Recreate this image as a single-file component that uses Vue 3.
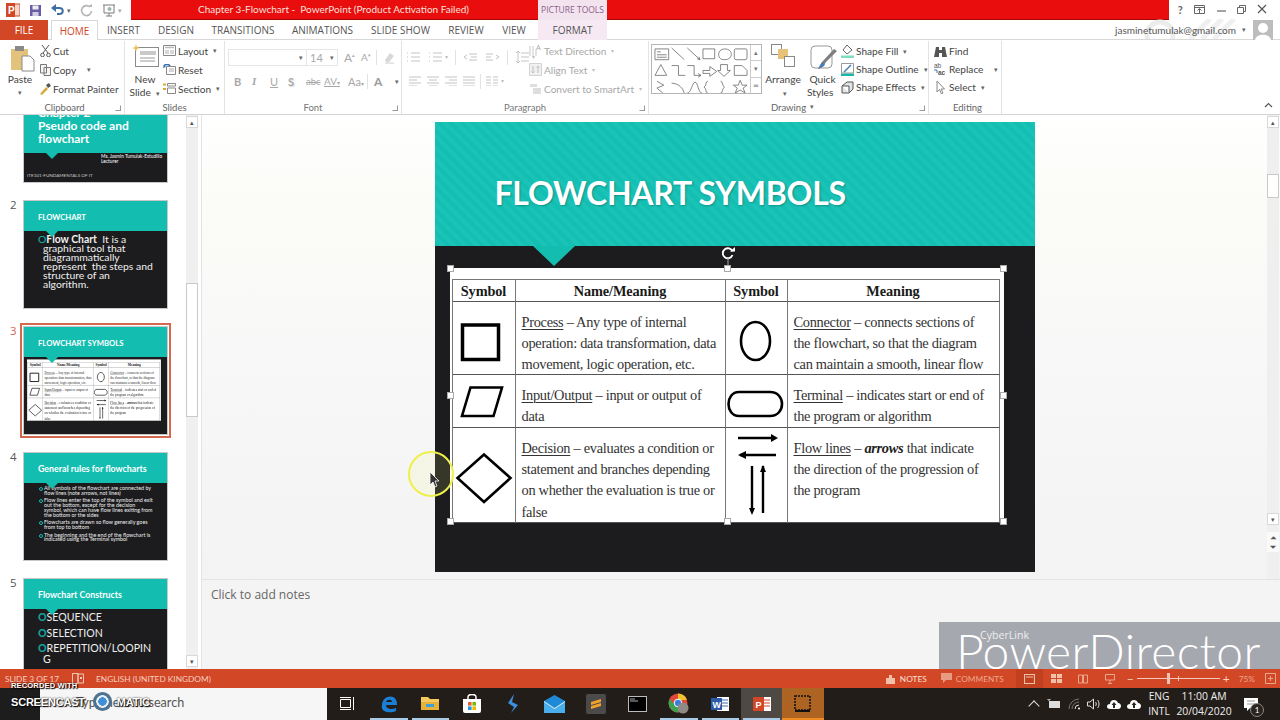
<script setup>
const tabs = [
  { t: 'INSERT', w: 51 }, { t: 'DESIGN', w: 54 }, { t: 'TRANSITIONS', w: 80 }, { t: 'ANIMATIONS', w: 79 },
  { t: 'SLIDE SHOW', w: 77 }, { t: 'REVIEW', w: 54 }, { t: 'VIEW', w: 42 }
]

const rows = [
  {
    sym: { h: 73, sw: 3.5, d: 'M9.5 23H45.5V57.5H9.5Z', f: '' },
    name: 'Process', first: ' – Any type of internal',
    lines: ['operation: data transformation, data', 'movement, logic operation, etc.'],
    sym2: { h: 73, sw: 2.6, d: 'M29.5 20C37.5 20 44 28.5 44 39S37.5 58 29.5 58 15 49.5 15 39 21.5 20 29.5 20Z', f: '' },
    name2: 'Connector', first2: ' – connects sections of',
    lines2: ['the flowchart, so that the diagram', 'can maintain a smooth, linear flow']
  },
  {
    sym: { h: 53, sw: 2.6, d: 'M17.5 12.5H49L40.5 41H9Z', f: '' },
    name: 'Input/Output', first: ' – input or output of',
    lines: ['data'],
    sym2: { h: 53, sw: 2.6, d: 'M13 17H44C60 17 60 41 44 41H13C-1 41-1 17 13 17Z', f: '' },
    name2: 'Terminal', first2: ' – indicates start or end of',
    lines2: ['the program or algorithm']
  },
  {
    sym: { h: 95, sw: 2.6, d: 'M31 26.5L57.5 50 31 74 4.5 50Z', f: '' },
    name: 'Decision', first: ' – evaluates a condition or',
    lines: ['statement and branches depending', 'on whether the evaluation is true or', 'false'],
    sym2: {
      h: 95, sw: 2.4,
      d: 'M12 10H46M14 27H50M26 38V82M37 38V85',
      f: 'M45 6L52 10 45 14ZM20 23L12 27 20 31ZM23 80H29L26 87ZM34 44H40L37 37Z'
    },
    name2: 'Flow lines', first2: ' – ', em: 'arrows', after: ' that indicate',
    lines2: ['the direction of the progression of', 'the program']
  }
]

const gallery = [
  'M3 4H17V15H3ZM5 7H9M5 10H15M5 12.5H15', 'M20 3L33 15', 'M36 3L49 15M49 15L46 14M49 15L48 12',
  'M52 4H64V14H52Z', 'M74 4C79 4 81 7 81 9.5S79 15 74 15 68 12 68 9.5 70 4 74 4Z', 'M85 4H96Q97 4 97 6V13Q97 15 95 15H86Q84 15 84 13V6Q84 4 85 4Z',
  'M9 20L3 31H15Z', 'M20 21H27V31H34', 'M36 21H43V31H50M50 31L47 29M50 31L47 33', 'M52 26H59V22L66 27 59 32V29H52Z', 'M70 20H77V26H80L73.5 32 67 26H70Z', 'M84 21H92L97 26V31H84Z',
  'M5 37L12 41 5 44 11 49', 'M20 39C27 39 32 44 33 50', 'M36 49C40 49 41 38 44 38S47 49 51 49', 'M57 37C54 37 56 42 53 43 56 44 54 49 57 49',
  'M70 37C73 37 71 42 74 43 71 44 73 49 70 49', 'M90 36L92 41H97L93 44 95 49 90 46 85 49 87 44 83 41H88Z'
]

const paragraphRow1 = [
  'M1 3H2M1 7H2M1 11H2M5 3H14M5 7H14M5 11H14',
  'M1 3H2M1 7H2M1 11H2M5 3H14M5 7H14M5 11H14'
]
</script>

<template>
  <div class="app">
    <!-- title bar -->
    <header class="titlebar">
      <div class="qat">
        <svg width="14" height="14" viewBox="0 0 14 14"><rect x="5" y="1" width="9" height="12" fill="#f3d6cc" stroke="#d24726"/><rect x="0" y="0" width="9" height="14" fill="#d24726"/><text x="2" y="11" class="logo-p">P</text></svg>
        <svg width="13" height="13" viewBox="0 0 13 13"><path d="M1 1H12V12H1Z" fill="#6a5aa8"/><rect x="3.5" y="1.5" width="6" height="4" fill="#eee"/><rect x="3.5" y="8" width="6" height="4" fill="#cfcfdf"/></svg>
        <svg width="14" height="12" viewBox="0 0 14 12"><path d="M2 4H8C13 4 13 10 8 10H6" fill="none" stroke="#3a6ea5" stroke-width="2"/><path d="M5 0V8L0 4Z" fill="#3a6ea5"/></svg>
        <span class="tiny-caret">▾</span>
        <svg width="13" height="13" viewBox="0 0 13 13"><path d="M10 3A5 5 0 1 0 11.5 7" fill="none" stroke="#b5b5b5" stroke-width="1.6"/><path d="M7 3H12V0Z" fill="#b5b5b5"/></svg>
        <svg width="14" height="14" viewBox="0 0 14 14"><path d="M1 2H13M2 2V10H12V2M7 10V13M4 13H10" fill="none" stroke="#7b7b7b"/><circle cx="7.5" cy="6" r="2" fill="#9bb7a8"/></svg>
        <span class="tiny-caret light">▾</span>
      </div>
      <div class="redbar">
        <div class="doc-title">Chapter 3-Flowchart -&nbsp; PowerPoint (Product Activation Failed)</div>
        <div class="tools-tab">PICTURE TOOLS</div>
      </div>
      <div class="winbtns">
        <span class="help">?</span>
        <svg width="11" height="9" viewBox="0 0 11 9"><path d="M.5.5H10.5V8.5H.5ZM.5 2.5H10.5M5.5 8V4M3.5 5.5L5.5 3.5 7.5 5.5" fill="none" stroke="#666"/></svg>
        <svg width="9" height="9" viewBox="0 0 9 9"><path d="M0 6H9" stroke="#666" stroke-width="1.2"/></svg>
        <svg width="9" height="9" viewBox="0 0 9 9"><path d="M.5 2.5H6.5V8.5H.5ZM2.5 2.5V.5H8.5V6.5H6.5" fill="none" stroke="#666"/></svg>
        <svg width="10" height="10" viewBox="0 0 10 10"><path d="M1 1L9 9M9 1L1 9" stroke="#555" stroke-width="1.2"/></svg>
      </div>
    </header>

    <!-- tabs -->
    <nav class="tabs">
      <span class="tab-file">FILE</span>
      <span class="tab-home">HOME</span>
      <span v-for="t in tabs" :key="t.t" class="tab" :style="{ width: t.w + 'px' }">{{ t.t }}</span>
      <span class="tab-format">FORMAT</span>
      <div class="account">
        <svg class="deco" width="150" height="20" viewBox="0 0 150 20"><circle cx="60" cy="16" r="13" fill="none" stroke="#ececec" stroke-width="5"/><path d="M90 20L110 0M102 20L122 0M114 20L134 0" stroke="#f0f0f0" stroke-width="5"/></svg>
        <span class="user">jasminetumulak@gmail.com</span>
        <span class="tiny-caret">▾</span>
        <svg class="avatar" width="20" height="20" viewBox="0 0 20 20"><rect width="20" height="20" fill="#bdbdbd"/><circle cx="10" cy="8" r="5" fill="#fff"/><path d="M2 20C3 13 17 13 18 20Z" fill="#fff"/></svg>
      </div>
    </nav>

    <!-- ribbon -->
    <section class="ribbon">
      <div class="group g-clip">
        <div class="gbody">
          <div class="bigcol paste">
            <svg width="24" height="26" viewBox="0 0 24 26"><rect x="0" y="3" width="17" height="21" fill="#e3c27c"/><rect x="4" y="0" width="9" height="5" fill="#8a8a8a"/><path d="M11 10H19L23 14V25H11Z" fill="#fff" stroke="#8a8a8a"/></svg>
            <span>Paste</span>
            <span class="tiny-caret">▾</span>
          </div>
          <div class="cmds">
            <div class="cmd"><svg width="11" height="12" viewBox="0 0 11 12"><path d="M2 0L8 8M9 0L3 8" stroke="#555" fill="none"/><circle cx="2.5" cy="10" r="1.8" fill="none" stroke="#555"/><circle cx="8.5" cy="10" r="1.8" fill="none" stroke="#555"/></svg><span>Cut</span></div>
            <div class="cmd"><svg width="11" height="12" viewBox="0 0 11 12"><path d="M.5.5H6.5V9H.5ZM4 3.5H10.5V11.5H4Z" fill="#f5f5f5" stroke="#777"/></svg><span>Copy</span><span class="tiny-caret sp">▾</span></div>
            <div class="cmd"><svg width="11" height="12" viewBox="0 0 11 12"><path d="M0 11L6 4 8 6 2 12Z" fill="#d9a93e"/><path d="M6 2L9 0 11 3 8 5Z" fill="#555"/></svg><span>Format Painter</span></div>
          </div>
        </div>
        <div class="glabel">Clipboard<i class="launch"></i></div>
      </div>

      <div class="group g-slides">
        <div class="gbody">
          <div class="bigcol newslide">
            <svg width="27" height="23" viewBox="0 0 27 23"><rect x="3.5" y="3.5" width="23" height="19" fill="#fff" stroke="#8a8a8a"/><rect x="8" y="7" width="16" height="4" fill="#c9c9c9"/><path d="M8 14H23M8 17H23" stroke="#9a9a9a"/><path d="M4 0L5 3 8 4 5 5 4 8 3 5 0 4 3 3Z" fill="#eec25b"/></svg>
            <span class="l2">New</span>
            <span class="l3">Slide <span class="tiny-caret">▾</span></span>
          </div>
          <div class="cmds">
            <div class="cmd"><svg width="13" height="11" viewBox="0 0 13 11"><path d="M.5.5H12.5V10.5H.5Z" fill="#fff" stroke="#888"/><path d="M2 2.5H11" stroke="#bbb" stroke-width="1.5"/><path d="M2 5H6V9H2Z" fill="#d7d7d7"/><path d="M7 5H11V9H7Z" fill="#d7d7d7"/></svg><span>Layout</span><span class="tiny-caret">▾</span></div>
            <div class="cmd"><svg width="13" height="11" viewBox="0 0 13 11"><path d="M3.5 2.5H12.5V10.5H3.5Z" fill="#fff" stroke="#888"/><path d="M1 2C2 0 6 0 7 2" stroke="#2f6fb0" fill="none" stroke-width="1.6"/><path d="M0 4L1 1 3 3Z" fill="#2f6fb0"/><path d="M6 5H11M6 7H11" stroke="#aaa"/></svg><span>Reset</span></div>
            <div class="cmd"><svg width="13" height="11" viewBox="0 0 13 11"><path d="M0 1.5H3" stroke="#d9a93e" stroke-width="2"/><path d="M4.5.5H12.5V3H4.5ZM4.5 5H12.5V10.5H4.5Z" fill="#fff" stroke="#888"/><path d="M0 6H3" stroke="#d9a93e" stroke-width="2"/></svg><span>Section</span><span class="tiny-caret">▾</span></div>
          </div>
        </div>
        <div class="glabel">Slides</div>
      </div>

      <div class="group g-font dim">
        <div class="gbody col">
          <div class="frow top">
            <span class="fontbox"><span class="tiny-caret">▾</span></span>
            <span class="sizebox">14<span class="tiny-caret">▾</span></span>
            <span class="grow">A<sup>▴</sup></span>
            <span class="shrink">A<sup>▾</sup></span>
            <i class="vsep"></i>
            <svg width="11" height="13" viewBox="0 0 11 13"><path d="M1 9L6 2 10 5 5 11H2Z" fill="#d8d8d8"/><path d="M1 12H10" stroke="#ccc"/></svg>
          </div>
          <div class="frow bot">
            <b>B</b><i class="it">I</i><u>U</u><b class="shd">S</b><s class="abc">abc</s><span class="av">AV<small>▾</small></span><span class="aa">Aa<small>▾</small></span><i class="vsep"></i><b class="colA">A</b><span class="tiny-caret">▾</span>
          </div>
        </div>
        <div class="glabel">Font<i class="launch"></i></div>
      </div>

      <div class="group g-para dim">
        <div class="gbody">
          <div class="para-left">
            <div class="frow p1">
              <svg v-for="(d, i) in paragraphRow1" :key="i" width="15" height="14" viewBox="0 0 15 14"><path :d="d" stroke="#c4c4c4" fill="none"/></svg>
              <span class="tiny-caret sm">▾</span><i class="vsep"></i>
              <svg width="15" height="14" viewBox="0 0 15 14"><path d="M6 4H14M8 7H14M6 10H14M4 5L1 7 4 9" stroke="#c4c4c4" fill="none"/></svg>
              <svg width="15" height="14" viewBox="0 0 15 14"><path d="M1 4H8M1 7H6M1 10H8M11 5L14 7 11 9" stroke="#c4c4c4" fill="none"/></svg>
              <i class="vsep"></i>
              <svg width="15" height="14" viewBox="0 0 15 14"><path d="M6 3H14M6 7H14M6 11H14M3 1V13M1 3L3 1 5 3M1 11L3 13 5 11" stroke="#c4c4c4" fill="none"/></svg>
              <span class="tiny-caret sm">▾</span>
            </div>
            <div class="frow p2">
              <svg width="14" height="10" viewBox="0 0 14 10"><path d="M1 1H13M1 4H9M1 7H13M1 10H9" stroke="#c4c4c4"/></svg>
              <svg width="14" height="10" viewBox="0 0 14 10"><path d="M1 1H13M3 4H11M1 7H13M3 10H11" stroke="#c4c4c4"/></svg>
              <svg width="14" height="10" viewBox="0 0 14 10"><path d="M1 1H13M5 4H13M1 7H13M5 10H13" stroke="#c4c4c4"/></svg>
              <svg width="14" height="10" viewBox="0 0 14 10"><path d="M1 1H13M1 4H13M1 7H13M1 10H13" stroke="#c4c4c4"/></svg>
              <i class="vsep"></i>
              <svg width="14" height="10" viewBox="0 0 14 10"><path d="M1 1H6M8 1H13M1 4H6M8 4H13M1 7H6M8 7H13M1 10H6M8 10H13" stroke="#c4c4c4"/></svg>
              <span class="tiny-caret sm">▾</span>
            </div>
          </div>
          <div class="cmds para-cmds">
            <div class="cmd"><svg width="13" height="13" viewBox="0 0 13 13"><path d="M1 2V12M4 2V12M7 5V12" stroke="#c8c8c8"/><text x="7" y="6" class="mini-a">A</text></svg><span>Text Direction</span><span class="tiny-caret sm">▾</span></div>
            <div class="cmd"><svg width="13" height="13" viewBox="0 0 13 13"><path d="M.5.5H12.5V12.5H.5Z" fill="#f1f1f1" stroke="#d3d3d3"/><path d="M4 3V10M9 3V10M2.5 8.5L4 10 5.5 8.5M7.5 4.5L9 3 10.5 4.5" stroke="#bdbdbd" fill="none"/></svg><span>Align Text</span><span class="tiny-caret sm">▾</span></div>
            <div class="cmd"><svg width="13" height="13" viewBox="0 0 13 13"><path d="M1 2H8V5H1ZM4 6H12V12H4Z" fill="#dedede"/></svg><span>Convert to SmartArt</span><span class="tiny-caret sm">▾</span></div>
          </div>
        </div>
        <div class="glabel">Paragraph<i class="launch"></i></div>
      </div>

      <div class="group g-draw">
        <div class="gbody">
          <div class="gallery">
            <svg width="98" height="48" viewBox="0 0 100 49"><path v-for="(d, i) in gallery" :key="i" :d="d" fill="none" stroke="#666" stroke-width=".8"/></svg>
            <div class="gal-btns"><span>▴</span><span>▾</span><span>≂</span></div>
          </div>
          <div class="bigcol arrange">
            <svg width="24" height="23" viewBox="0 0 24 23"><rect x="0.5" y="0.5" width="10" height="10" fill="#fff" stroke="#888"/><rect x="7" y="5" width="10" height="10" fill="#e6c17a"/><rect x="13.5" y="12.5" width="10" height="10" fill="#fff" stroke="#888"/></svg>
            <span class="l2">Arrange</span>
            <span class="l3"><span class="tiny-caret">▾</span></span>
          </div>
          <div class="bigcol quick">
            <svg width="28" height="26" viewBox="0 0 28 26"><rect x="1" y="1" width="21" height="22" rx="4" fill="#fff" stroke="#999"/><path d="M27 6L16 17 13 22 8 24 12 17 24 4Z" fill="#7f7f7f"/><path d="M8 24L12 17 15 20Z" fill="#3f7dbd"/></svg>
            <span class="l2">Quick</span>
            <span class="l3">Styles <span class="tiny-caret">▾</span></span>
          </div>
          <div class="cmds tight shapes">
            <div class="cmd"><svg width="13" height="13" viewBox="0 0 13 13"><path d="M6 0L11 5 6 9 2 5Z" fill="#fff" stroke="#666"/><rect y="10.5" width="13" height="2.5" fill="#7edec0"/></svg><span>Shape Fill</span><span class="tiny-caret">▾</span></div>
            <div class="cmd"><svg width="13" height="13" viewBox="0 0 13 13"><path d="M.5.5H12.5V10H.5Z" fill="#fff" stroke="#999"/><path d="M3 9L10 2" stroke="#3f7dbd" stroke-width="1.5"/><rect y="10.5" width="13" height="2.5" fill="#1fb5a6"/></svg><span>Shape Outline</span><span class="tiny-caret">▾</span></div>
            <div class="cmd"><svg width="13" height="13" viewBox="0 0 13 13"><path d="M1 5L6 1H12V8L8 12H1Z" fill="#e3e3e3" stroke="#555"/><path d="M1 5H8V12" fill="#fff" stroke="#555"/></svg><span>Shape Effects</span><span class="tiny-caret">▾</span></div>
          </div>
        </div>
        <div class="glabel">Drawing<i class="launch"></i></div>
      </div>

      <div class="group g-edit">
        <div class="gbody">
          <div class="cmds tight">
            <div class="cmd"><svg width="13" height="11" viewBox="0 0 13 11"><path d="M0 11L2 1H5V4H8V1H11L13 11H8V7H5V11Z" fill="#555"/></svg><span>Find</span></div>
            <div class="cmd"><svg width="13" height="13" viewBox="0 0 13 13"><text x="0" y="5" class="ab">ab</text><text x="4" y="12" class="ab strong">ac</text><path d="M0 7H3V10" fill="none" stroke="#3f7dbd"/></svg><span>Replace</span><span class="tiny-caret sp2">▾</span></div>
            <div class="cmd"><svg width="13" height="13" viewBox="0 0 13 13"><path d="M3 0V11L5.5 8.5 7.5 13 9 12 7 8H10.5Z" fill="#fff" stroke="#888"/></svg><span>Select</span><span class="tiny-caret">▾</span></div>
          </div>
        </div>
        <div class="glabel">Editing</div>
      </div>

      <svg class="collapse" width="9" height="6" viewBox="0 0 9 6"><path d="M1 5L4.5 1.5 8 5" fill="none" stroke="#555" stroke-width="1.2"/></svg>
    </section>

    <!-- main -->
    <main class="main">
      <aside class="thumbs">
        <div class="thumb-list">
          <div class="trow">
            <span class="num"></span>
            <div class="thumb">
              <div class="thead tall"><span class="t1">Chapter 2<br>Pseudo code and<br>flowchart</span><i class="notch"></i></div>
              <div class="tbody"><span class="author">Ms. Jasmin Tumulak-Estudillo<br>Lecturer</span><span class="course">ITE101-FUNDAMENTALS OF IT</span></div>
            </div>
          </div>
          <div class="trow">
            <span class="num">2</span>
            <div class="thumb">
              <div class="thead"><span class="tt">FLOWCHART</span><i class="notch"></i></div>
              <div class="tbody"><p class="t2"><span class="bullet o">O</span><b>Flow Chart</b>&nbsp; It is a<br>graphical tool that<br>diagrammatically<br>represent&nbsp; the steps and<br>structure of an<br>algorithm.</p></div>
            </div>
          </div>
          <div class="trow active">
            <span class="num">3</span>
            <div class="thumb">
              <div class="thead"><span class="tt">FLOWCHART SYMBOLS</span><i class="notch"></i></div>
              <div class="tbody">
                <div class="mini-wrap">
                  <div class="sheet">
                    <div class="grid">
                      <div class="hcell">Symbol</div><div class="hcell">Name/Meaning</div><div class="hcell">Symbol</div><div class="hcell">Meaning</div>
                      <template v-for="r in rows" :key="r.name">
                        <div class="sym"><svg width="63" :height="r.sym.h" :viewBox="`0 0 63 ${r.sym.h}`"><path :d="r.sym.d" fill="none" stroke="#000" :stroke-width="r.sym.sw"/></svg></div>
                        <div class="desc"><u>{{ r.name }}</u>{{ r.first }}<div v-for="l in r.lines" :key="l">{{ l }}</div></div>
                        <div class="sym"><svg width="62" :height="r.sym2.h" :viewBox="`0 0 62 ${r.sym2.h}`"><path :d="r.sym2.d" fill="none" stroke="#000" :stroke-width="r.sym2.sw"/><path :d="r.sym2.f" fill="#000"/></svg></div>
                        <div class="desc"><u>{{ r.name2 }}</u>{{ r.first2 }}<b v-if="r.em"><i>{{ r.em }}</i></b>{{ r.after }}<div v-for="l in r.lines2" :key="l">{{ l }}</div></div>
                      </template>
                    </div>
                  </div>
                </div>
              </div>
            </div>
          </div>
          <div class="trow">
            <span class="num">4</span>
            <div class="thumb">
              <div class="thead"><span class="tt cap">General rules for flowcharts</span><i class="notch"></i></div>
              <div class="tbody">
                <ul class="t4">
                  <li>All symbols of the flowchart are connected by<br>flow lines (note arrows, not lines)</li>
                  <li>Flow lines enter the top of the symbol and exit<br>out the bottom, except for the decision<br>symbol, which can have flow lines exiting from<br>the bottom or the sides</li>
                  <li>Flowcharts are drawn so flow generally goes<br>from top to bottom</li>
                  <li>The beginning and the end of the flowchart is<br>indicated using the Terminal symbol</li>
                </ul>
              </div>
            </div>
          </div>
          <div class="trow">
            <span class="num">5</span>
            <div class="thumb">
              <div class="thead"><span class="tt cap">Flowchart Constructs</span><i class="notch"></i></div>
              <div class="tbody">
                <div class="t5"><span class="bullet">O</span>SEQUENCE</div>
                <div class="t5"><span class="bullet">O</span>SELECTION</div>
                <div class="t5"><span class="bullet">O</span>REPETITION/LOOPIN<span class="t5-g">G</span></div>
              </div>
            </div>
          </div>
        </div>
      </aside>
      <div class="vscroll left">
        <span class="sbtn">▴</span>
        <span class="sthumb"></span>
        <span class="sbtn end">▾</span>
      </div>

      <div class="workspace">
        <div class="stage">
          <div class="canvas">
            <div class="slide">
              <div class="slide-head">
                <h1>FLOWCHART SYMBOLS</h1>
                <i class="slide-notch"></i>
              </div>
              <div class="slide-body">
                <div class="sheet">
                  <div class="grid">
                    <div class="hcell">Symbol</div><div class="hcell">Name/Meaning</div><div class="hcell">Symbol</div><div class="hcell">Meaning</div>
                    <template v-for="r in rows" :key="r.name">
                      <div class="sym"><svg width="63" :height="r.sym.h" :viewBox="`0 0 63 ${r.sym.h}`"><path :d="r.sym.d" fill="none" stroke="#000" :stroke-width="r.sym.sw"/></svg></div>
                      <div class="desc"><u>{{ r.name }}</u>{{ r.first }}<div v-for="l in r.lines" :key="l">{{ l }}</div></div>
                      <div class="sym"><svg width="62" :height="r.sym2.h" :viewBox="`0 0 62 ${r.sym2.h}`"><path :d="r.sym2.d" fill="none" stroke="#000" :stroke-width="r.sym2.sw"/><path :d="r.sym2.f" fill="#000"/></svg></div>
                      <div class="desc"><u>{{ r.name2 }}</u>{{ r.first2 }}<b v-if="r.em"><i>{{ r.em }}</i></b>{{ r.after }}<div v-for="l in r.lines2" :key="l">{{ l }}</div></div>
                    </template>
                  </div>
                  <i class="h h-tl"></i><i class="h h-tc"></i><i class="h h-tr"></i><i class="h h-ml"></i><i class="h h-mr"></i><i class="h h-bl"></i><i class="h h-bc"></i><i class="h h-br"></i>
                  <svg class="rotate" width="14" height="18" viewBox="0 0 14 18"><path d="M11.5 4.5A5 5 0 1 0 11.5 8" fill="none" stroke="#fff" stroke-width="1.8"/><path d="M9 4.5H14V0Z" fill="#fff"/><path d="M7 11V18" stroke="#aaa"/></svg>
                </div>
              </div>
            </div>
            <div class="pointer">
              <svg width="50" height="50" viewBox="0 0 50 50"><circle cx="25" cy="25" r="22" fill="rgba(247,247,120,.12)" stroke="#eef04a" stroke-width="2"/><path d="M24 23V36L27 33 29 38 31 37 29 32H33Z" fill="#333" stroke="#fff" stroke-width=".8"/></svg>
            </div>
          </div>
          <div class="vscroll right">
            <span class="sbtn">▴</span>
            <span class="sthumb r"></span>
            <span class="sbtn end2">▾</span>
            <span class="pg">⏶</span>
            <span class="pg">⏷</span>
          </div>
        </div>
        <div class="notes">Click to add notes</div>
      </div>
    </main>

    <!-- status -->
    <footer class="status">
      <span class="s-slide">SLIDE 3 OF 17</span>
      <svg class="s-book" width="12" height="11" viewBox="0 0 12 11"><path d="M.5.5H6V10.5H.5ZM6 1H11.5V10H6Z" fill="none" stroke="#f3c8b8"/><path d="M8 4L10 6M10 4L8 6" stroke="#f3c8b8"/></svg>
      <span class="s-lang">ENGLISH (UNITED KINGDOM)</span>
      <div class="s-right">
        <svg width="9" height="10" viewBox="0 0 9 10"><path d="M0 4H9V10H0ZM3 4V1H6V4Z" fill="#f2bfa9"/></svg>
        <span class="s-notes">NOTES</span>
        <svg width="11" height="11" viewBox="0 0 11 11"><path d="M0 0H11V7H5L2 10V7H0Z" fill="#e79b80"/></svg>
        <span class="s-comments">COMMENTS</span>
        <span class="view on"><svg width="11" height="10" viewBox="0 0 11 10"><path d="M.5.5H10.5V9.5H.5ZM2 3H9" fill="none" stroke="#f2bfa9" stroke-width="1.2"/></svg></span>
        <span class="view"><svg width="11" height="9" viewBox="0 0 11 9"><path d="M0 0H5V4H0ZM6 0H11V4H6ZM0 5H5V9H0ZM6 5H11V9H6Z" fill="#f2bfa9"/></svg></span>
        <span class="view"><svg width="10" height="10" viewBox="0 0 10 10"><path d="M.5 1H4.5V9H.5ZM5.5 1H9.5V9H5.5Z" fill="none" stroke="#eba78e"/></svg></span>
        <span class="view"><svg width="10" height="10" viewBox="0 0 10 10"><path d="M.5.5H9.5V6H.5ZM5 6V9M3 9.5H7" fill="none" stroke="#eba78e"/></svg></span>
        <div class="zoom">
          <span class="zm">−</span>
          <div class="track"><i class="knob"></i><i class="mid"></i></div>
          <span class="zm">+</span>
          <span class="zpct">75%</span>
          <svg width="11" height="11" viewBox="0 0 11 11"><path d="M.5.5H10.5V10.5H.5ZM3 5.5H8M5.5 3V8" fill="none" stroke="#eba78e"/></svg>
        </div>
      </div>
    </footer>

    <!-- taskbar -->
    <div class="taskbar">
      <div class="startcell"></div>
      <div class="searchbox">Type here to search</div>
      <div class="tbar-icons">
        <span class="ti"><svg width="15" height="13" viewBox="0 0 15 13"><path d="M.5 2.5H10.5V10.5H.5ZM0 .5H11M0 12.5H11M13.5 0V13" fill="none" stroke="#fff"/></svg></span>
        <span class="ti u"><svg width="18" height="18" viewBox="0 0 18 18"><path d="M2 10C2 3 9 0 13 2 17 4 17 8 17 10H6C6 14 11 15 16 13V16C10 19 0 17 2 10ZM6 7H12C12 4 7 4 6 7Z" fill="#1c7fd6"/></svg></span>
        <span class="ti u"><svg width="18" height="15" viewBox="0 0 18 15"><path d="M0 1H7L9 3H18V14H0Z" fill="#f4c95d"/><rect x="0" y="6" width="18" height="8" fill="#e8b23a"/><rect x="5" y="8" width="8" height="3" fill="#3f9fd8"/></svg></span>
        <span class="ti"><svg width="20" height="19" viewBox="0 0 20 19"><path d="M1 5H19V17Q19 19 17 19H3Q1 19 1 17Z" fill="#fff"/><path d="M6 6V3C6-.5 14-.5 14 3V6" fill="none" stroke="#fff" stroke-width="1.5"/><rect x="6" y="8" width="3.6" height="3.6" fill="#e55f3b"/><rect x="10.4" y="8" width="3.6" height="3.6" fill="#7fba00"/><rect x="6" y="12.4" width="3.6" height="3.6" fill="#1f9ae0"/><rect x="10.4" y="12.4" width="3.6" height="3.6" fill="#f4b800"/></svg></span>
        <span class="ti"><svg width="12" height="19" viewBox="0 0 12 19"><path d="M7 0L1 9 7 13 4 19 11 11 5 8Z" fill="#3b8fdd"/></svg></span>
        <span class="ti"><svg width="21" height="18" viewBox="0 0 21 18"><path d="M0 6L10.5 0 21 6V18H0Z" fill="#1e8ad6"/><path d="M0 6L10.5 13 21 6V8L10.5 15 0 8Z" fill="#dff1fc"/><path d="M0 7L10.5 14 21 7V18H0Z" fill="#4aaeec"/></svg></span>
        <span class="ti"><svg width="20" height="20" viewBox="0 0 20 20"><rect width="20" height="20" rx="2" fill="#4a4a4a"/><path d="M5 8L15 5V8L5 11ZM5 12L15 9V12L5 15Z" fill="#f0a02b"/></svg></span>
        <span class="ti"><svg width="19" height="16" viewBox="0 0 19 16"><rect x=".5" y=".5" width="18" height="15" fill="#000" stroke="#bbb"/><path d="M2 3H7M2 5H10" stroke="#ddd" stroke-width=".8"/></svg></span>
        <span class="ti u"><svg width="21" height="21" viewBox="0 0 21 21"><circle cx="10" cy="10" r="9.5" fill="#e04a3b"/><path d="M10 .5A9.5 9.5 0 0 1 19 7H10Z" fill="#f2c12e"/><path d="M1.5 6A9.5 9.5 0 0 0 10 19.5L13 12 7 12Z" fill="#3da14f"/><circle cx="10" cy="10" r="3.8" fill="#3a7fd8" stroke="#fff"/><circle cx="15" cy="15" r="5.5" fill="#8f8a86"/></svg></span>
        <span class="ti u"><svg width="18" height="16" viewBox="0 0 18 16"><rect x="6" y="1" width="12" height="14" fill="#fff"/><path d="M11 4H17M11 7H17M11 10H17" stroke="#3d6fb5"/><rect y="2" width="11" height="12" fill="#2a5aa8"/><text x="1.5" y="11.5" class="tb-l">W</text></svg></span>
        <span class="ti u act-ppt"><svg width="18" height="16" viewBox="0 0 18 16"><rect x="6" y="1" width="12" height="14" fill="#fff"/><path d="M11 4H17M11 7H17M11 10H17" stroke="#d24726"/><rect y="1" width="11" height="14" fill="#d24726"/><text x="2.5" y="12" class="tb-l">P</text></svg></span>
        <span class="ti act-snip"><svg width="17" height="17" viewBox="0 0 17 17"><rect x="1" y="1" width="15" height="14" fill="none" stroke="#111" stroke-width="1.5" stroke-dasharray="2 1"/><path d="M1 16H16" stroke="#111" stroke-width="2"/></svg></span>
      </div>
      <div class="tray">
        <span class="tr-chev"></span>
        <svg width="14" height="10" viewBox="0 0 14 10"><path d="M2 2H13V9H2Z" fill="#ddd"/><path d="M0 0H4M2 0V2" stroke="#ddd"/></svg>
        <svg width="13" height="12" viewBox="0 0 13 12"><path d="M1 11A10 10 0 0 1 11 1M4 11A7 7 0 0 1 11 4" stroke="#7a7470" fill="none"/><path d="M7 11A4 4 0 0 1 11 7" stroke="#ddd" fill="none"/><circle cx="11" cy="10.5" r="1" fill="#fff"/></svg>
        <svg width="13" height="12" viewBox="0 0 13 12"><path d="M.5 4H3L6.5 1V11L3 8H.5Z" fill="none" stroke="#ddd"/><path d="M8.5 4C9.5 5 9.5 7 8.5 8M10.5 2C12.5 4 12.5 8 10.5 10" fill="none" stroke="#ddd"/></svg>
        <svg width="14" height="10" viewBox="0 0 14 10"><path d="M3 10C-1 10-1 5 3 5 3 0 10 0 11 4 15 4 15 10 11 10Z" fill="#fff"/><path d="M7 3L4.5 6H6V9H8V6H9.5Z" fill="#2a2420"/></svg>
        <svg width="14" height="10" viewBox="0 0 14 10"><path d="M3 10C-1 10-1 5 3 5 3 0 10 0 11 4 15 4 15 10 11 10Z" fill="#fff"/><path d="M7 3L4.5 6H6V9H8V6H9.5Z" fill="#2a2420"/></svg>
        <div class="lang"><span>ENG</span><span>INTL</span></div>
        <div class="clock"><span>11:00 AM</span><span>20/04/2020</span></div>
        <div class="notif">
          <svg width="15" height="15" viewBox="0 0 15 15"><path d="M0 1H14V11H6L3 14V11H0Z" fill="#fff"/><path d="M3 4H11M3 7H11" stroke="#999"/></svg>
          <span class="badge">1</span>
        </div>
      </div>
    </div>

    <!-- recording overlays -->
    <div class="powerdirector">
      <span class="cyber">CyberLink</span>
      <span class="pd">PowerDirector</span>
    </div>
    <div class="screencast">
      <span class="rec">RECORDED WITH</span>
      <div class="sc-row"><span>SCREENCAST</span><i class="sc-dot"></i><span class="matic">MATIC</span></div>
    </div>
  </div>
</template>

<style scoped>
.app {
  position: relative;
  width: 1280px;
  height: 720px;
  overflow: hidden;
  display: flex;
  flex-direction: column;
  background: #fff;
  color: #444;
  font-family: Lato, "Open Sans", sans-serif;
  font-size: 10px;
  filter: blur(.3px);
}
svg { display: block; flex: none; }
.tiny-caret { font-size: 7px; color: #666; margin-left: 3px; line-height: 1; }
.tiny-caret.light { color: #aaa; }
.tiny-caret.sm { font-size: 6px; color: #c0c0c0; }
.tiny-caret.sp { margin-left: 9px; }
.tiny-caret.sp2 { margin-left: 9px; }
.logo-p { font: 700 10px "Liberation Sans", sans-serif; fill: #fff; }

/* title bar */
.titlebar { display: flex; height: 20px; flex: none; }
.qat { width: 131px; flex: none; display: flex; align-items: center; gap: 9px; padding-left: 6px; box-sizing: border-box; }
.qat .tiny-caret { margin-left: -7px; }
.redbar { flex: 1; display: flex; background: #e90d0d; border-bottom: 1px solid #a00808; padding-left: 67px; }
.doc-title { width: 340px; flex: none; color: #fbe0dc; font-size: 10px; line-height: 19px; white-space: nowrap; }
.tools-tab { width: 69px; background: #f3e3ef; color: #8a5f88; font: 8.5px/19px "Open Sans", sans-serif; text-align: center; height: 20px; }
.winbtns { width: 111px; flex: none; display: flex; align-items: center; justify-content: space-around; padding: 0 7px 2px 3px; box-sizing: border-box; }
.help { font-size: 11px; font-weight: 700; color: #666; }

/* tabs */
.tabs { height: 20px; flex: none; display: flex; align-items: center; font: 10px "Open Sans", sans-serif; color: #555; position: relative; border-bottom: 1px solid #d8d8d8; box-sizing: border-box; }
.tab { text-align: center; flex: none; }
.tab-file { width: 48px; height: 20px; line-height: 20px; background: #d24726; color: #fff; text-align: center; flex: none; }
.tab-home { width: 47px; margin-left: 3px; height: 20px; line-height: 20px; color: #d24726; text-align: center; background: #fff; border: 1px solid #d8d8d8; border-bottom: 0; box-sizing: border-box; flex: none; position: relative; }
.tab-format { width: 69px; margin-left: 3px; height: 20px; line-height: 20px; text-align: center; background: #f6e9f3; color: #555; flex: none; }
.account { margin-left: auto; display: flex; align-items: center; position: relative; padding-right: 7px; height: 20px; }
.deco { position: absolute; right: 30px; top: -1px; }
.user { position: relative; font: 10px Lato, sans-serif; color: #555; }
.account .tiny-caret { margin: 0 7px 0 6px; position: relative; }
.avatar { position: relative; }

/* ribbon */
.ribbon { height: 75px; flex: none; display: flex; border-bottom: 1px solid #d4d4d4; position: relative; box-sizing: border-box; }
.group { display: flex; flex-direction: column; height: 73px; margin-top: 1px; border-right: 1px solid #e3e3e3; box-sizing: border-box; flex: none; }
.gbody { flex: 1; display: flex; min-height: 0; }
.gbody.col { flex-direction: column; }
.glabel { height: 16px; line-height: 19px; text-align: center; font-size: 9.5px; color: #666; position: relative; flex: none; }
.launch { position: absolute; right: 3px; bottom: 3px; width: 4px; height: 4px; border: 1px solid #999; border-top-color: transparent; border-left-color: transparent; }
.g-clip { width: 125px; padding-left: 5px; }
.g-slides { width: 100px; }
.g-font { width: 177px; }
.g-para { width: 247px; }
.g-draw { width: 280px; }
.g-edit { width: 73px; }
.bigcol { display: flex; flex-direction: column; align-items: center; line-height: 13px; flex: none; font-size: 10.2px; }
.cmds { display: flex; flex-direction: column; }
.cmd { display: flex; align-items: center; height: 19px; gap: 2px; white-space: nowrap; font-size: 10.1px; }
.cmds.tight { padding-top: 1px; }
.cmds.tight .cmd { height: 18px; }
.paste { width: 30px; padding-top: 5px; margin-right: 5px; }
.paste svg { margin: 0 0 1px 6px; }
.paste .tiny-caret { margin: 3px 0 0; }
.newslide { width: 34px; margin: 3px 1px 0 3px; }
.newslide svg { margin-bottom: 6px; }
.dim { color: #b2b2b2; }
.dim .glabel { color: #777; }
.frow { display: flex; align-items: center; color: #a8a8a8; }
.frow.top { height: 18px; margin: 7px 0 0 3px; font-size: 11px; }
.frow.bot { height: 18px; margin: 6px 0 0 9px; font-size: 11px; }
.fontbox { width: 79px; height: 17px; border: 1px solid #e6e6e6; box-sizing: border-box; display: flex; justify-content: flex-end; align-items: center; padding-right: 3px; }
.sizebox { width: 31px; height: 17px; border: 1px solid #e6e6e6; border-left: 0; box-sizing: border-box; display: flex; justify-content: space-between; align-items: center; padding: 0 3px; }
.grow { margin-left: 6px; font-size: 12px; width: 17px; }
.shrink { font-size: 10px; width: 15px; }
.grow sup, .shrink sup { font-size: 5px; }
.vsep { width: 1px; height: 15px; background: #e2e2e2; flex: none; }
.top .vsep { margin-right: 7px; }
.bot > b, .bot > .it, .bot > u { width: 18px; text-align: left; }
.bot .it { font-style: italic; font-family: "Liberation Serif", serif; font-weight: 700; }
.bot .shd { text-shadow: 1px 1px 0 #ddd; }
.abc { width: 18px; font-size: 9.5px; }
.av { width: 24px; font-size: 10px; text-decoration: underline; }
.av small, .aa small { font-size: 6px; }
.aa { width: 19px; font-size: 11px; }
.bot .vsep { margin-right: 6px; }
.colA { font-size: 12px; color: #9a9a9a; }
.para-left { width: 127px; padding-left: 4px; box-sizing: border-box; flex: none; }
.frow.p1 { height: 18px; margin-top: 7px; gap: 7px; }
.frow.p1 .tiny-caret { margin-left: -5px; }
.frow.p2 { height: 18px; margin-top: 6px; margin-left: 2px; gap: 4px; }
.frow.p2 .tiny-caret { margin-left: -2px; }
.para-cmds .cmd { color: #a8a8a8; }
.mini-a { font: 7px "Liberation Sans", sans-serif; fill: #aaa; }
.gallery { width: 111px; height: 50px; margin: 3px 0 0 2px; border: 1px solid #b5b5b5; box-sizing: border-box; display: flex; flex: none; }
.gal-btns { width: 11px; margin-left: auto; display: flex; flex-direction: column; border-left: 1px solid #ccc; }
.gal-btns span { flex: 1; font-size: 7px; text-align: center; line-height: 15px; color: #777; border-bottom: 1px solid #ccc; }
.gal-btns span:last-child { border-bottom: 0; }
.arrange { width: 36px; margin-left: 3px; padding-top: 3px; }
.arrange svg { margin-bottom: 6px; }
.quick { width: 31px; margin-left: 6px; padding-top: 4px; }
.quick svg { margin-bottom: 2px; margin-left: 2px; }
.shapes { margin-left: 3px; }
.g-edit { padding-left: 5px; }
.ab { font: 6.5px "Liberation Sans", sans-serif; fill: #555; }
.ab.strong { font-weight: 700; }
.collapse { position: absolute; right: 7px; bottom: 6px; }

/* main */
.main { flex: 1; min-height: 0; display: flex; }
.thumbs { width: 186px; flex: none; overflow: hidden; }
.thumb-list { margin-top: -41px; display: flex; flex-direction: column; gap: 17px; }
.trow { display: flex; position: relative; }
.num { width: 23px; flex: none; box-sizing: border-box; padding: 0 0 0 10px; font: 11.5px/9px "Open Sans", sans-serif; color: #555; }
.trow.active .num { color: #d2694f; }
.thumb { width: 145px; height: 109px; display: flex; flex-direction: column; border: 1px solid #c8c8c8; box-sizing: border-box; flex: none; overflow: hidden; }
.trow.active .thumb { outline: 2px solid #d2694f; outline-offset: 1px; overflow: visible; }
.thead { height: 30px; flex: none; background: #13bdb0; position: relative; }
.thead.tall { height: 78px; }
.notch { position: absolute; left: 22px; bottom: -6px; width: 0; height: 0; border-left: 6px solid transparent; border-right: 6px solid transparent; border-top: 6px solid #13bdb0; z-index: 1; }
.tbody { flex: 1; background: #1c1c1e; position: relative; color: #eee; min-height: 0; }
.t1 { position: absolute; left: 14px; bottom: 8px; color: #fff; font: 700 12px/13px Lato, sans-serif; white-space: nowrap; }
.tt { position: absolute; left: 14px; top: 11px; color: #fff; font: 700 7.7px/10px Lato, sans-serif; white-space: nowrap; }
.tt.cap { font-size: 8.8px; }
.author { position: absolute; right: 2px; top: 1px; width: 64px; font: 4.8px/4.6px Lato, sans-serif; color: #fff; white-space: nowrap; }
.course { position: absolute; left: 3px; bottom: 4px; font: 4.6px Lato, sans-serif; color: #ccc; white-space: nowrap; }
.t2 { margin: 4px 0 0 19px; text-indent: -5px; font: 10.4px/9px Lato, sans-serif; color: #f0f0f0; white-space: nowrap; }
.bullet { color: #13bdb0; }
.bullet.o { margin-right: 0; }
.mini-wrap { width: 145px; height: 0; margin-left: 3px; transform: scale(.2417); transform-origin: 0 0; padding-top: 10px; }
.t4 { list-style: none; margin: 3px 0 0 20px; padding: 0; font: 5.35px/4.7px Lato, sans-serif; color: #eee; }
.t4 li { position: relative; margin-bottom: 3px; white-space: nowrap; }
.t4 li::before { content: ""; position: absolute; left: -5px; top: 1px; width: 2px; height: 2px; border: .6px solid #13bdb0; border-radius: 50%; }
.t5 { margin-left: 14px; font: 10.6px/15.5px Lato, sans-serif; color: #eee; }
.t5:first-child { margin-top: 1px; }
.t5 .bullet { color: #1a9d93; font-weight: 900; }
.t5-g { display: block; margin: -3px 0 0 5px; line-height: 11px; }

.vscroll { flex: none; position: relative; display: flex; flex-direction: column; background: #f0f0f0; }
.vscroll.left { width: 12px; margin-right: 3px; }
.sbtn { height: 12px; background: #fff; border: 1px solid #d8d8d8; box-sizing: border-box; font-size: 7px; line-height: 10px; text-align: center; color: #555; margin-top: 1px; flex: none; }
.sthumb { height: 134px; margin-top: 155px; background: #fff; border: 1px solid #c9c9c9; box-sizing: border-box; flex: none; }
.sbtn.end { margin-top: auto; margin-bottom: 2px; }

.workspace { flex: 1; min-width: 0; display: flex; flex-direction: column; border-left: 1px solid #e4e4e4; }
.stage { flex: 1; min-height: 0; display: flex; background: linear-gradient(#fff, #fbfbf7 20%, #f8f8f8 50%, #f3f3f3); }
.canvas { flex: 1; min-width: 0; display: flex; justify-content: center; padding-top: 7px; position: relative; }
.slide { width: 600px; height: 450px; display: flex; flex-direction: column; flex: none; }
.slide-head { height: 124px; flex: none; position: relative; background: repeating-linear-gradient(45deg, #13bfb2 0, #13bfb2 4px, #1bc3b7 4px, #1bc3b7 8px); }
.slide-head h1 { margin: 0; padding: 50px 0 0 60px; font: 700 32px/42px Lato, sans-serif; letter-spacing: -.25px; color: #fff; text-shadow: 1px 1px 2px rgba(0, 0, 0, .25); }
.slide-notch { position: absolute; left: 98px; bottom: -20px; width: 0; height: 0; border-left: 21px solid transparent; border-right: 21px solid transparent; border-top: 20px solid #13bdb0; }
.slide-body { flex: 1; background: #1c1c1e; padding: 22px 0 0 15px; }
.sheet { position: relative; width: 554px; height: 254px; background: #fff; box-sizing: border-box; padding: 11px 0 0 2px; }
.grid { display: grid; grid-template-columns: 63px 210px 62px 212px; grid-template-rows: 22px 73px 53px 95px; border-top: 1px solid #777; border-left: 1px solid #777; width: 547px; box-sizing: content-box; font-family: "Liberation Serif", serif; }
.hcell { border-right: 1px solid #777; border-bottom: 1px solid #555; font-weight: 700; font-size: 14.3px; line-height: 22px; letter-spacing: -.1px; color: #1a1a1a; text-align: center; box-sizing: border-box; }
.sym { border-right: 1px solid #777; border-bottom: 1px solid #555; box-sizing: border-box; overflow: hidden; }
.desc { border-right: 1px solid #777; border-bottom: 1px solid #555; box-sizing: border-box; padding: 10px 0 0 6px; font-size: 14.4px; line-height: 21.2px; letter-spacing: -.3px; color: #333; white-space: nowrap; }
.desc u { text-underline-offset: 2px; text-decoration-thickness: 1px; }
.desc b { color: #222; }
.h { position: absolute; width: 5px; height: 5px; background: #fff; border: 1px solid #aaa; box-sizing: content-box; }
.h-tl { left: -3px; top: -3px; } .h-tc { left: 274px; top: -3px; } .h-tr { right: -3px; top: -3px; }
.h-ml { left: -3px; top: 124px; } .h-mr { right: -3px; top: 124px; }
.h-bl { left: -3px; bottom: -3px; } .h-bc { left: 274px; bottom: -3px; } .h-br { right: -3px; bottom: -3px; }
.rotate { position: absolute; left: 271px; top: -21px; }
.pointer { position: absolute; left: 204px; top: 334px; }

.vscroll.right { width: 12px; margin-right: 1px; background: #efefef; align-items: stretch; }
.sthumb.r { height: 24px; margin-top: 46px; }
.sbtn.end2 { margin-top: auto; margin-bottom: 7px; }
.pg { height: 10px; line-height: 10px; text-align: center; font-size: 8px; color: #555; background: #fafafa; flex: none; }
.pg:last-child { margin-bottom: 27px; }
.notes { height: 90px; flex: none; border-top: 1px solid #e4e4e4; background: #f4f4f4; box-sizing: border-box; padding: 6px 0 0 9px; color: #666; font: 12px/17px "Open Sans", sans-serif; }

/* status */
.status { height: 19px; flex: none; background: #d24726; color: #f6cfc0; display: flex; align-items: center; font-size: 8.3px; position: relative; }
.s-slide { margin-left: 5px; width: 67px; flex: none; }
.s-book { flex: none; }
.s-lang { margin-left: 12px; }
.s-right { margin-left: auto; display: flex; align-items: center; height: 100%; }
.s-notes { margin: 0 14px 0 5px; color: #fbe0d6; }
.s-comments { margin: 0 12px 0 4px; color: #eba78e; }
.view { width: 27px; height: 100%; display: flex; align-items: center; justify-content: center; flex: none; }
.view.on { background: #c04020; }
.zoom { display: flex; align-items: center; margin-left: 2px; padding-right: 4px; }
.zm { font-size: 12px; line-height: 10px; color: #f6cfc0; width: 9px; text-align: center; }
.track { width: 83px; height: 1px; background: #f3c8b8; position: relative; margin: 0 2px; }
.knob { position: absolute; left: 30px; top: -5px; width: 3px; height: 11px; background: #f1c2b0; }
.mid { position: absolute; left: 41px; top: -2px; width: 1px; height: 5px; background: #f1c2b0; }
.zpct { margin: 0 10px 0 8px; color: #eba78e; }

/* taskbar */
.taskbar { height: 32px; flex: none; display: flex; background: #231d19; color: #eee; position: relative; }
.startcell { width: 40px; flex: none; background: #1d1d1d; }
.searchbox { width: 287px; flex: none; box-sizing: border-box; background: #f6f6f6; color: #555; font: 12.6px/30px Lato, sans-serif; padding-left: 36px; white-space: nowrap; }
.tbar-icons { display: flex; flex: none; }
.ti { width: 41.4px; height: 32px; display: flex; align-items: center; justify-content: center; flex: none; box-sizing: border-box; padding-bottom: 1px; position: relative; }
.ti.u::after { content: ""; position: absolute; left: 2px; right: 2px; bottom: 0; height: 2px; background: #a8cce8; }
.act-ppt { background: #4f4944; }
.act-snip { background: #ad6321; }
.act-snip::after { content: ""; position: absolute; left: 0; right: 0; bottom: 0; height: 2px; background: #ef8a1e; }
.tray { margin-left: auto; display: flex; align-items: center; gap: 6.5px; padding-right: 20px; }
.tr-chev { width: 7px; height: 7px; border-left: 1px solid #ddd; border-top: 1px solid #ddd; transform: rotate(45deg); margin: 4px 3px 0 0; }
.lang { display: flex; flex-direction: column; align-items: center; margin-left: -3.5px; font: 10.2px/15px "Open Sans", sans-serif; width: 30px; }
.clock { display: flex; flex-direction: column; align-items: center; font: 10.4px/15px "Open Sans", sans-serif; width: 56px; margin-left: -4.5px; }
.notif { position: relative; width: 16px; margin-left: 5.5px; }
.badge { position: absolute; left: 6px; top: 6px; width: 12px; height: 12px; border: 1px solid #888; border-radius: 50%; font-size: 8px; line-height: 12px; text-align: center; background: #2a2420; color: #fff; }
.tb-l { font: 700 9px "Liberation Sans", sans-serif; fill: #fff; }

/* overlays */
.powerdirector { position: absolute; left: 939px; top: 622px; width: 341px; height: 47px; background: #a6a8b0; color: #fff; }
.cyber { position: absolute; left: 41px; top: 6px; font: 10.6px/14px "Open Sans", sans-serif; color: #eee; }
.pd { position: absolute; left: 17px; top: -3px; font: 300 48px/64px Lato, sans-serif; letter-spacing: .3px; white-space: nowrap; color: #fff; }
.screencast { position: absolute; left: 11px; top: 680px; color: #fff; font-family: "Liberation Sans", sans-serif; font-weight: 700; text-shadow: 0 0 2px #000, 1px 1px 1px #000; }
.rec { display: block; font-size: 7.6px; line-height: 12px; letter-spacing: .1px; }
.sc-row { display: flex; align-items: center; font-size: 11px; letter-spacing: -.2px; margin-top: 3px; white-space: nowrap; }
.sc-dot { width: 13px; height: 13px; margin: 0 8px 0 11px; background: radial-gradient(circle, #3d8fd9 0 4px, #e8eef3 4.5px 6px, #3d6f96 6.5px 8px, transparent 8.5px); border-radius: 50%; box-shadow: 0 0 0 3px #4d7391; }
</style>
